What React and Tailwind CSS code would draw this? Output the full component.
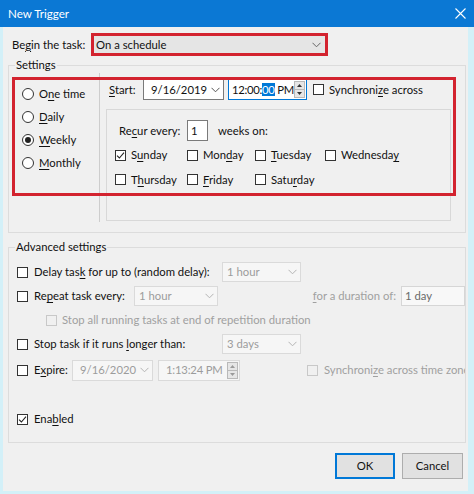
import React from "react";

function Chevron({ color = "#444" }) {
  return (
    <svg width="9" height="6" viewBox="0 0 9 6" className="flex-none">
      <path d="M0.5 0.8 L4.5 4.8 L8.5 0.8" stroke={color} strokeWidth="1" fill="none" />
    </svg>
  );
}

function Box({ checked = false, disabled = false }) {
  return (
    <span
      className={
        disabled
          ? "w-[11px] h-[11px] flex-none border border-[#c8c8c8] bg-[#f0f0f0]"
          : "w-[11px] h-[11px] flex-none border border-[#333333] bg-white flex items-center justify-center"
      }
    >
      {checked && (
        <svg width="9" height="9" viewBox="0 0 9 9">
          <path d="M1 4.6 L3.4 7 L8 1.6" stroke="#222" strokeWidth="1.1" fill="none" />
        </svg>
      )}
    </span>
  );
}

function Radio({ checked = false }) {
  return (
    <span className="w-[12px] h-[12px] flex-none rounded-full border border-[#333333] bg-white flex items-center justify-center">
      {checked && <span className="w-[6px] h-[6px] rounded-full bg-[#222]" />}
    </span>
  );
}

function Spinner({ dim = false }) {
  const c = dim ? "#9a9a9a" : "#333";
  return (
    <span className="ml-auto mr-[1px] w-[11px] h-[17px] flex-none flex flex-col border border-[#b9b9b9] bg-[#e6e6e6]">
      <span className="flex-1 flex items-center justify-center border-b border-[#b9b9b9]">
        <svg width="5" height="3" viewBox="0 0 5 3">
          <path d="M0 3 L2.5 0 L5 3 Z" fill={c} />
        </svg>
      </span>
      <span className="flex-1 flex items-center justify-center">
        <svg width="5" height="3" viewBox="0 0 5 3">
          <path d="M0 0 L2.5 3 L5 0 Z" fill={c} />
        </svg>
      </span>
    </span>
  );
}

function U({ children }) {
  return <span className="underline underline-offset-[2px] decoration-[1px]">{children}</span>;
}

export default function App() {
  return (
    <div className="w-[474px] h-[494px] bg-[#f0f0f0] relative overflow-hidden flex flex-col font-['Segoe_UI','Lato',sans-serif] text-[11.3px] leading-[16px] text-[#111] whitespace-nowrap">
      {/* title bar */}
      <div className="h-[27px] flex-none bg-[#0b78d4] flex items-center pl-[8px] pr-[8px] text-white text-[11.6px]">
        <span>New Trigger</span>
        <svg width="11" height="11" viewBox="0 0 11 11" className="ml-auto">
          <path d="M0.5 0.5 L10.5 10.5 M10.5 0.5 L0.5 10.5" stroke="#fff" strokeWidth="1.1" />
        </svg>
      </div>

      {/* dialog body */}
      <div className="flex-1 flex flex-col border-l-[3px] border-r-[6px] border-b-[3px] border-[#d3f0f8]">
        {/* begin the task */}
        <div className="flex items-center pt-[6px] pl-[9px]">
          <span className="w-[79px]">
            Be<U>g</U>in the task:
          </span>
          <div className="w-[237px] h-[23px] border-[3px] border-[#d3232f]">
            <div className="h-full bg-[#e5e5e5] flex items-center pl-[2px]">
              <span>On a schedule</span>
              <span className="ml-auto w-[17px] flex justify-center">
                <Chevron color="#666" />
              </span>
            </div>
          </div>
        </div>

        {/* settings group */}
        <fieldset className="mt-[1px] ml-[5px] w-[458px] min-w-0 border border-[#dcdcdc] pb-[10px]">
          <legend className="ml-[6px] px-[1px] leading-[16px]">Settings</legend>
          <div className="flex h-[149px]">
            <div className="w-[91px] flex-none border-r border-[#cdcdcd] flex flex-col pl-[13px] pt-[9px]">
              {[
                [<>O<U>n</U>e time</>, false],
                [<><U>D</U>aily</>, false],
                [<><U>W</U>eekly</>, true],
                [<><U>M</U>onthly</>, false],
              ].map(([label, on], i) => (
                <div key={i} className="h-[23px] flex items-center gap-[5px]">
                  <Radio checked={on} />
                  <span>{label}</span>
                </div>
              ))}
            </div>

            <div className="flex-1 min-w-0 flex flex-col">
              <div className="mt-[6px] pl-[9px] h-[21px] flex items-center">
                <span className="w-[34px]">
                  <U>S</U>tart:
                </span>
                <div className="w-[81px] h-[21px] border border-[#7a7a7a] bg-white flex items-center pl-[7px]">
                  <span>9/16/2019</span>
                  <span className="ml-auto w-[16px] flex justify-center">
                    <Chevron color="#555" />
                  </span>
                </div>
                <div className="ml-[4px] w-[79px] h-[21px] border border-[#0078d7] bg-white flex items-center pl-[3px]">
                  <span className="tracking-[-0.3px]">
                    12:00:<span className="bg-[#0078d7] text-white">00</span> PM
                  </span>
                  <Spinner />
                </div>
                <span className="ml-[6px]">
                  <Box />
                </span>
                <span className="ml-[5px]">
                  Synchroni<U>z</U>e across
                </span>
              </div>

              <div className="mt-[9px] ml-[6px] w-[345px] h-[112px] border border-[#d8d8d8] flex flex-col">
                <div className="mt-[10px] pl-[12px] h-[21px] flex items-center">
                  <span className="w-[68px]">
                    Re<U>c</U>ur every:
                  </span>
                  <div className="w-[21px] h-[21px] border border-[#7a7a7a] bg-white flex items-center pl-[3px]">1</div>
                  <span className="ml-[10px]">weeks on:</span>
                </div>
                <div className="mt-[2px] pl-[8px] grid grid-cols-[72px_68px_70px_1fr] auto-rows-[24.5px]">
                  {[
                    [<>S<U>u</U>nday</>, true],
                    [<>Mon<U>d</U>ay</>, false],
                    [<><U>T</U>uesday</>, false],
                    [<>Wednesda<U>y</U></>, false],
                    [<>T<U>h</U>ursday</>, false],
                    [<><U>F</U>riday</>, false],
                    [<>Satu<U>r</U>day</>, false],
                  ].map(([label, on], i) => (
                    <div key={i} className="flex items-center gap-[5px]">
                      <Box checked={on} />
                      <span>{label}</span>
                    </div>
                  ))}
                </div>
              </div>
            </div>
          </div>
        </fieldset>

        {/* advanced settings group */}
        <fieldset className="mt-[6px] ml-[5px] w-[458px] min-w-0 border border-[#dcdcdc] pb-[11px]">
          <legend className="ml-[6px] px-[1px] leading-[16px]">Advanced settings</legend>
          <div className="pt-[5px] pl-[8px] flex flex-col overflow-hidden">
            <div className="h-[24px] flex items-center">
              <div className="w-[205px] flex-none flex items-center gap-[6px]">
                <Box />
                <span>
                  Delay tas<U>k</U> for up to (random delay):
                </span>
              </div>
              <div className="w-[79px] h-[20px] border border-[#dadada] bg-[#f6f6f6] flex items-center pl-[4px] text-[#9c9c9c]">
                <span>1 hour</span>
                <span className="ml-auto w-[16px] flex justify-center">
                  <Chevron color="#b4b4b4" />
                </span>
              </div>
            </div>

            <div className="h-[24px] flex items-center">
              <div className="w-[117px] flex-none flex items-center gap-[6px]">
                <Box />
                <span>
                  Re<U>p</U>eat task every:
                </span>
              </div>
              <div className="w-[84px] h-[20px] border border-[#dadada] bg-[#f6f6f6] flex items-center pl-[4px] text-[#9c9c9c]">
                <span>1 hour</span>
                <span className="ml-auto w-[16px] flex justify-center">
                  <Chevron color="#b4b4b4" />
                </span>
              </div>
              <span className="ml-auto text-[#a0a0a0]">
                <U>f</U>or a duration of:
              </span>
              <div className="ml-[5px] w-[64px] h-[20px] border border-[#d6d6d6] bg-[#f8f8f8] flex items-center pl-[3px] text-[#6a6a6a]">
                1 day
              </div>
            </div>

            <div className="h-[24px] flex items-center pl-[29px] gap-[5px] text-[#a0a0a0]">
              <Box disabled />
              <span>
                Stop all running tasks at end of repetition durat<U>i</U>on
              </span>
            </div>

            <div className="h-[24px] flex items-center">
              <div className="w-[205px] flex-none flex items-center gap-[6px]">
                <Box />
                <span>
                  Stop task if it runs <U>l</U>onger than:
                </span>
              </div>
              <div className="w-[79px] h-[20px] border border-[#dadada] bg-[#f6f6f6] flex items-center pl-[4px] text-[#9c9c9c]">
                <span>3 days</span>
                <span className="ml-auto w-[16px] flex justify-center">
                  <Chevron color="#b4b4b4" />
                </span>
              </div>
            </div>

            <div className="mt-[2px] h-[24px] flex items-center">
              <div className="w-[55px] flex-none flex items-center gap-[6px]">
                <Box />
                <span>
                  E<U>x</U>pire:
                </span>
              </div>
              <div className="w-[81px] flex-none h-[21px] border border-[#dadada] bg-[#f6f6f6] flex items-center pl-[7px] text-[#9c9c9c]">
                <span>9/16/2020</span>
                <span className="ml-auto w-[16px] flex justify-center">
                  <Chevron color="#b4b4b4" />
                </span>
              </div>
              <div className="ml-[5px] flex-none w-[82px] h-[21px] border border-[#dadada] bg-[#f6f6f6] flex items-center pl-[7px] text-[#9c9c9c]">
                <span className="tracking-[-0.2px]">1:13:24 PM</span>
                <Spinner dim />
              </div>
              <span className="ml-[67px] flex-none flex items-center gap-[6px] text-[#a0a0a0]">
                <Box disabled />
                <span>
                  Synchroni<U>z</U>e across time zones
                </span>
              </span>
            </div>

            <div className="mt-[25px] h-[24px] flex items-center gap-[6px]">
              <Box checked />
              <span>
                Ena<U>b</U>led
              </span>
            </div>
          </div>
        </fieldset>

        {/* dialog buttons */}
        <div className="mt-[10px] flex justify-end gap-[7px] pr-[5px]">
          <button className="w-[60px] h-[26px] border-2 border-[#0078d7] bg-[#e1e1e1] flex items-center justify-center">
            OK
          </button>
          <button className="w-[61px] h-[26px] border border-[#adadad] bg-[#e1e1e1] flex items-center justify-center">
            Cancel
          </button>
        </div>
      </div>

      {/* review highlights */}
      <div className="absolute left-[12px] top-[77px] w-[444px] h-[119px] border-[3px] border-[#d3232f] pointer-events-none" />
    </div>
  );
}
